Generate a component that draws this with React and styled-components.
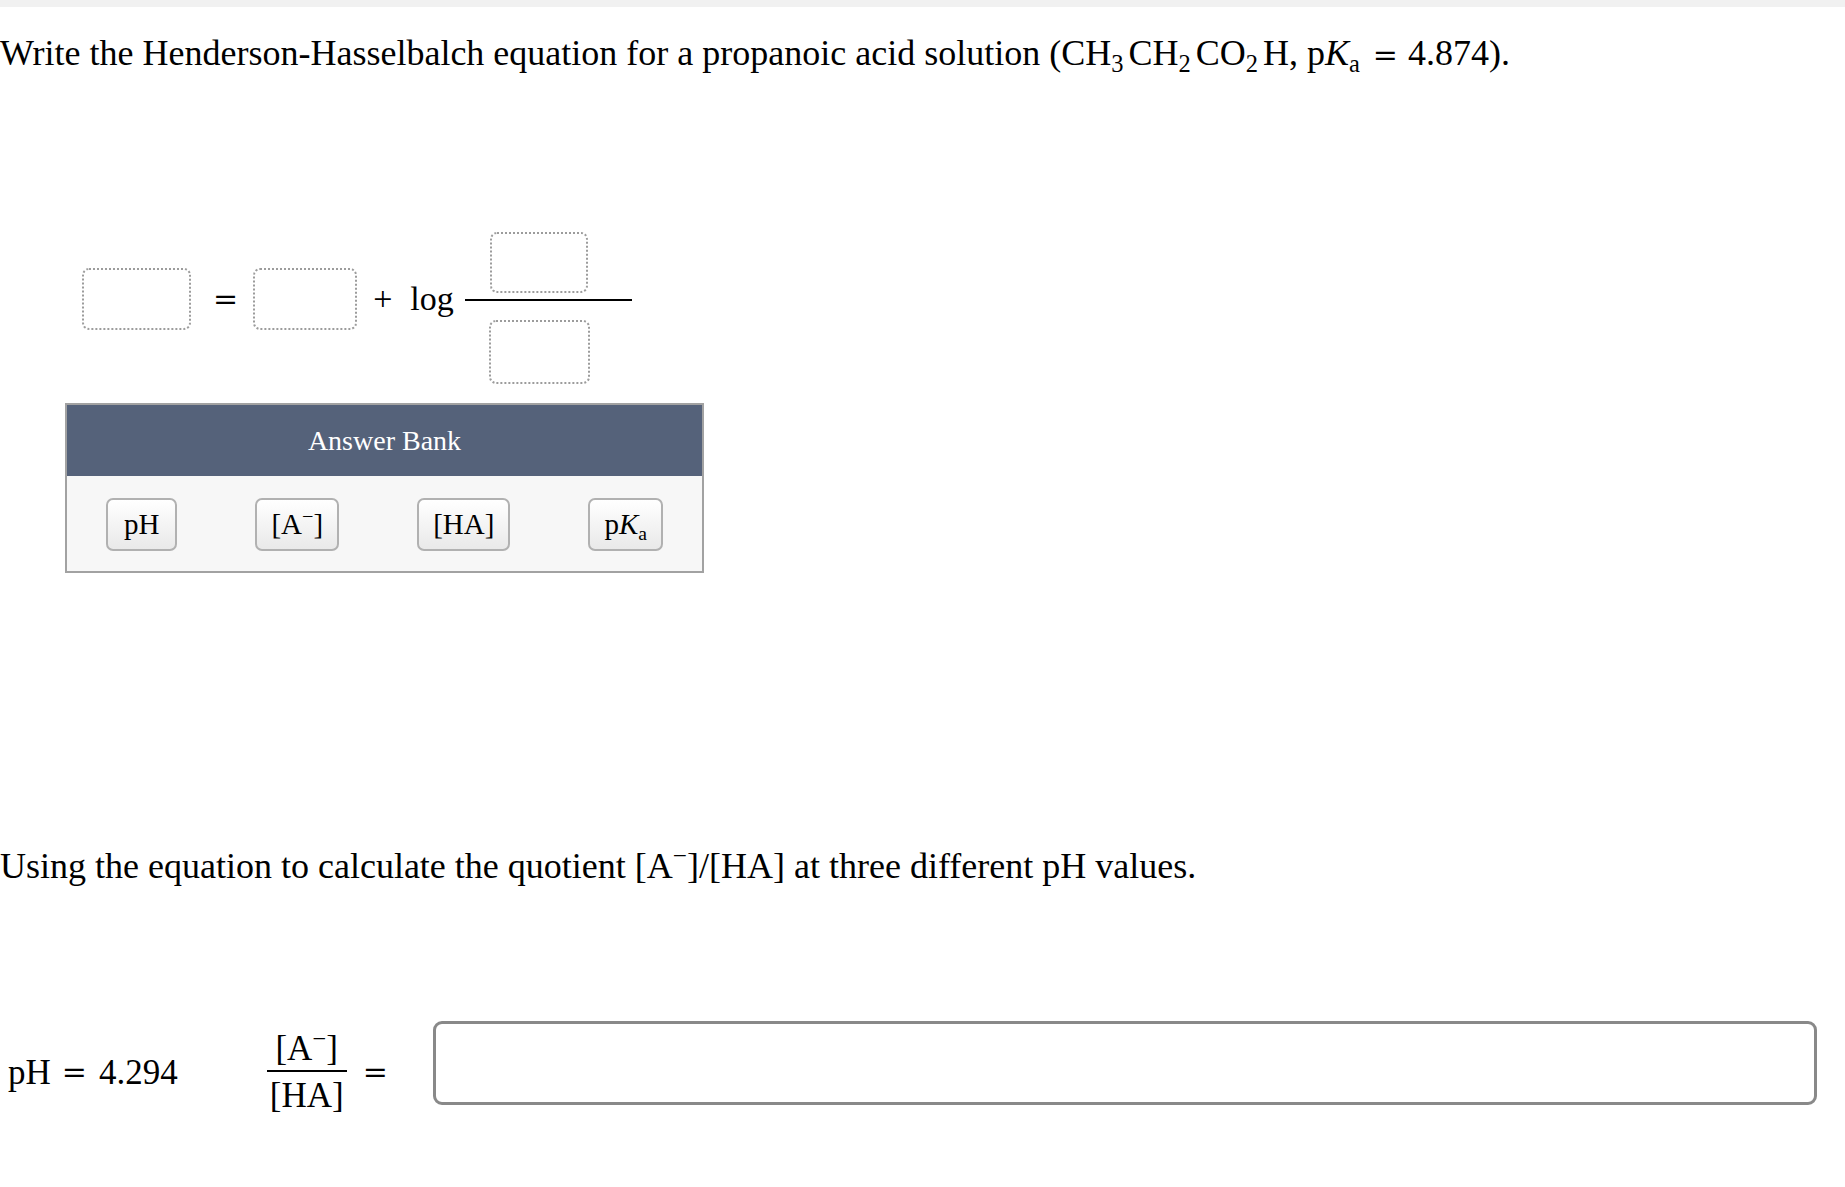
import React from "react";
import styled, { createGlobalStyle } from "styled-components";

const GlobalStyle = createGlobalStyle`
  html, body {
    margin: 0;
    padding: 0;
    background: #fff;
  }
  body {
    font-family: "Liberation Serif", "Times New Roman", serif;
    color: #000;
  }
`;

const Page = styled.div`
  width: 1845px;
  min-height: 1187px;
`;

const TopBar = styled.div`
  height: 7px;
  background: #f1f1f1;
`;

const Prompt = styled.p`
  margin: ${(p) => p.$top}px 0 0;
  font-size: 36px;
  line-height: 44px;
  white-space: nowrap;
`;

const Sub = styled.sub`
  font-size: 0.68em;
  vertical-align: -0.28em;
  line-height: 0;
  margin-right: ${(p) => p.$gap || 0}px;
`;

const Sup = styled.sup`
  font-size: 0.7em;
  vertical-align: 0.55em;
  line-height: 0;
`;

const Ital = styled.i`
  font-style: italic;
`;

// the equals sign in the rendered math is a touch heavier than the text face
const Equals = styled.span`
  font-family: "DejaVu Serif", "Liberation Serif", serif;
  font-size: ${(p) => p.$size || 28}px;
  line-height: 1;
  margin: 0 ${(p) => p.$r}px 0 ${(p) => p.$l}px;
`;

const EquationRow = styled.div`
  display: flex;
  align-items: center;
  margin: 140px 0 0 82px;
  height: 168px;
`;

const DropBox = styled.div`
  box-sizing: border-box;
  width: ${(p) => p.$w}px;
  height: ${(p) => p.$h}px;
  border: 2px dotted #9c9c9c;
  border-radius: 7px;
  flex-shrink: 0;
`;

const Op = styled.span`
  font-size: 34px;
  line-height: 1;
  margin: 0 ${(p) => p.$r}px 0 ${(p) => p.$l}px;
`;

const Fraction = styled.div`
  display: flex;
  flex-direction: column;
  align-items: center;
  padding-top: 17px;
`;

const FracPart = styled.div`
  display: flex;
  justify-content: center;
  padding-right: ${(p) => p.$shift}px;
  margin: ${(p) => p.$m};
`;

const FracLine = styled.div`
  width: ${(p) => p.$w}px;
  height: 2px;
  background: #000;
`;

const Bank = styled.section`
  box-sizing: border-box;
  width: 639px;
  margin: 20px 0 0 65px;
  border: 2px solid #a2a2a2;
  background: #f7f7f7;
`;

const BankHeader = styled.div`
  height: 71px;
  background: #55627a;
  color: #fff;
  font-size: 28px;
  display: flex;
  align-items: center;
  justify-content: center;
`;

const BankBody = styled.div`
  height: 95px;
  box-sizing: border-box;
  padding-top: 22px;
  display: flex;
  justify-content: space-around;
  align-items: flex-start;
`;

const Chip = styled.button`
  box-sizing: border-box;
  height: 53px;
  padding: 0 ${(p) => p.$pad}px;
  font-family: "Liberation Serif", "Times New Roman", serif;
  font-size: 29px;
  color: #000;
  border: 2px solid #b1b1b1;
  border-radius: 7px;
  background: linear-gradient(#ffffff, #e9e9e9);
  cursor: pointer;
`;

const ResultRow = styled.div`
  display: flex;
  align-items: center;
  margin-top: 133px;
  padding-left: 8px;
`;

const MathText = styled.span`
  font-size: 35px;
  line-height: 1;
  white-space: nowrap;
`;

const SmallFrac = styled.div`
  display: flex;
  flex-direction: column;
  align-items: center;
  font-size: 35px;
  line-height: 1;
  margin-left: 89px;
`;

const SmallLine = styled.div`
  width: 80px;
  height: 2px;
  background: #000;
  margin: 4px 0 6px;
`;

const AnswerInput = styled.input`
  box-sizing: border-box;
  width: 1384px;
  height: 84px;
  margin: 0 0 18px 45px;
  border: 3px solid #898989;
  border-radius: 9px;
  background: #fff;
  outline: none;
`;

const PKa = () => (
  <>
    p<Ital>K</Ital>
    <Sub>a</Sub>
  </>
);

const Aminus = () => (
  <>
    [A<Sup>−</Sup>]
  </>
);

export default function App() {
  return (
    <Page>
      <GlobalStyle />
      <TopBar />
      <Prompt $top={24}>
        Write the Henderson-Hasselbalch equation for a propanoic acid solution
        (CH<Sub $gap={5}>3</Sub>CH<Sub $gap={5}>2</Sub>CO<Sub $gap={5}>2</Sub>H,
        p<Ital>K</Ital>
        <Sub $gap={5}>a</Sub>
        <Equals $size={30} $l={8} $r={10}>=</Equals>4.874).
      </Prompt>

      <EquationRow>
        <DropBox $w={109} $h={62} />
        <Equals $size={30} $l={22} $r={15}>=</Equals>
        <DropBox $w={104} $h={62} />
        <Op $l={16} $r={18}>+</Op>
        <Op $l={0} $r={11}>log</Op>
        <Fraction>
          <FracPart $shift={18} $m="0 0 6px">
            <DropBox $w={98} $h={61} />
          </FracPart>
          <FracLine $w={167} />
          <FracPart $shift={18} $m="19px 0 0">
            <DropBox $w={101} $h={64} />
          </FracPart>
        </Fraction>
      </EquationRow>

      <Bank>
        <BankHeader>Answer Bank</BankHeader>
        <BankBody>
          <Chip $pad={16}>pH</Chip>
          <Chip $pad={14}>
            <Aminus />
          </Chip>
          <Chip $pad={14}>[HA]</Chip>
          <Chip $pad={14}>
            <PKa />
          </Chip>
        </BankBody>
      </Bank>

      <Prompt $top={271}>
        Using the equation to calculate the quotient <Aminus />/[HA] at three
        different pH values.
      </Prompt>

      <ResultRow>
        <MathText>pH</MathText>
        <Equals $size={30} $l={11} $r={12}>=</Equals>
        <MathText>4.294</MathText>
        <SmallFrac>
          <span>
            <Aminus />
          </span>
          <SmallLine />
          <span>[HA]</span>
        </SmallFrac>
        <Equals $size={30} $l={16} $r={0}>=</Equals>
        <AnswerInput aria-label="quotient" />
      </ResultRow>
    </Page>
  );
}
